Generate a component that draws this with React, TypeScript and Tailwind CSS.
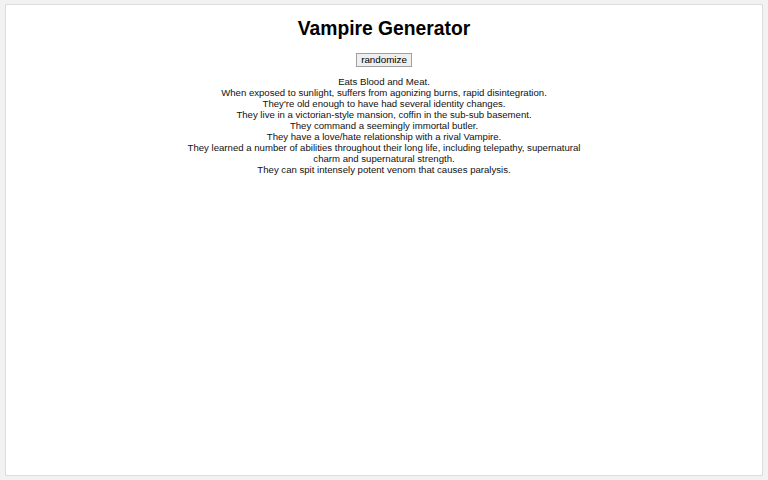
const traits = [
  "Eats Blood and Meat.",
  "When exposed to sunlight, suffers from agonizing burns, rapid disintegration.",
  "They're old enough to have had several identity changes.",
  "They live in a victorian-style mansion, coffin in the sub-sub basement.",
  "They command a seemingly immortal butler.",
  "They have a love/hate relationship with a rival Vampire.",
  "They learned a number of abilities throughout their long life, including telepathy, supernatural charm and supernatural strength.",
  "They can spit intensely potent venom that causes paralysis.",
]

export default function App() {
  return (
    <div className="h-[480px] w-[768px] bg-[#f2f2f2] px-[5px] pt-[4px] pb-[4px] font-['Liberation_Sans',Arial,sans-serif] text-black">
      <div className="flex h-[472px] flex-col items-center border border-[#dcdcdc] bg-white pt-[12px]">
        <h1 className="text-[19.3px] font-bold leading-[24px]">Vampire Generator</h1>
        <button className="mt-[12px] h-[14px] border border-[#a0a0a0] bg-[#efefef] px-[4px] text-[9.8px] leading-[12px]">
          randomize
        </button>
        <div className="mt-[9px] w-[400px] text-center text-[9.6px] leading-[11px] text-[#111]">
          {traits.map((t) => (
            <div key={t}>{t}</div>
          ))}
        </div>
      </div>
    </div>
  )
}
